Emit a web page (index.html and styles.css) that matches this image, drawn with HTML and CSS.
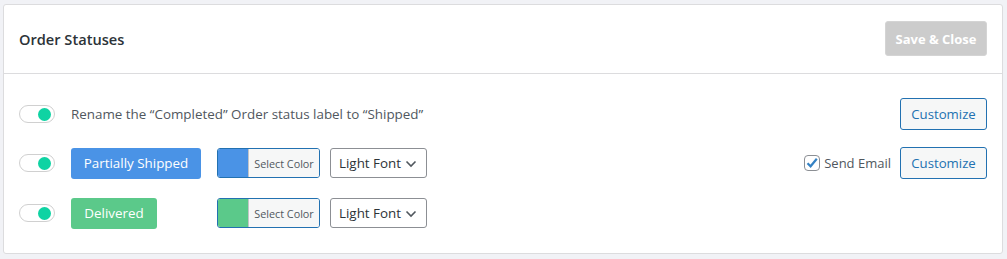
FILE: index.html
```html
<!DOCTYPE html>
<html>
<head>
<meta charset="utf-8">
<link rel="stylesheet" href="styles.css">
</head>
<body>
<div class="card">
  <div class="card-header">
    <h2 class="title">Order Statuses</h2>
    <button class="btn-save">Save &amp; Close</button>
  </div>
  <div class="card-body">
    <div class="row">
      <span class="toggle"><span class="knob"></span></span>
      <span class="row-text">Rename the “Completed” Order status label to “Shipped”</span>
      <div class="row-right">
        <button class="btn-customize">Customize</button>
      </div>
    </div>
    <div class="row">
      <span class="toggle"><span class="knob"></span></span>
      <div class="badge-slot"><span class="badge badge-blue">Partially Shipped</span></div>
      <div class="color-pick"><span class="swatch swatch-blue"></span><span class="color-label">Select Color</span></div>
      <div class="font-select">Light Font<svg class="chev" width="12" height="8" viewBox="0 0 12 8"><path d="M1.5 1.5 L6 6 L10.5 1.5" fill="none" stroke="#50575e" stroke-width="1.6"/></svg></div>
      <div class="row-right">
        <label class="send-email"><span class="checkbox"><svg width="14" height="14" viewBox="0 0 14 14"><path d="M2.5 7.2 L5.6 10.3 L11.8 2.8" fill="none" stroke="#3582c4" stroke-width="2.2"/></svg></span>Send Email</label>
        <button class="btn-customize">Customize</button>
      </div>
    </div>
    <div class="row">
      <span class="toggle"><span class="knob"></span></span>
      <div class="badge-slot"><span class="badge badge-green">Delivered</span></div>
      <div class="color-pick"><span class="swatch swatch-green"></span><span class="color-label">Select Color</span></div>
      <div class="font-select">Light Font<svg class="chev" width="12" height="8" viewBox="0 0 12 8"><path d="M1.5 1.5 L6 6 L10.5 1.5" fill="none" stroke="#50575e" stroke-width="1.6"/></svg></div>
    </div>
  </div>
</div>
</body>
</html>
```

FILE: styles.css
```css
* { box-sizing: border-box; }
body {
  margin: 0;
  background: #f1f2f6;
  font-family: "Open Sans", "Noto Sans", sans-serif;
  color: #3c434a;
}
.card {
  margin: 4px 4px 0 3px;
  height: 250px;
  background: #fff;
  border: 1px solid #dcdcde;
  border-radius: 3px;
}
.card-header {
  height: 69px;
  border-bottom: 1px solid #dcdcde;
  display: flex;
  align-items: center;
  justify-content: space-between;
  padding: 0 15px 1px 15px;
}
.title {
  margin: 0;
  font-size: 14.6px;
  font-weight: 600;
  color: #2c3338;
}
.btn-save {
  width: 102px;
  height: 35px;
  background: #cccccc;
  border: 1px solid #d4d4d4;
  border-radius: 3px;
  color: #fff;
  font-family: inherit;
  font-size: 13px;
  font-weight: 700;
  padding: 0;
}
.card-body {
  padding: 24px 15px 0 15px;
  display: flex;
  flex-direction: column;
  gap: 17px;
}
.row {
  height: 32px;
  display: flex;
  align-items: center;
}
.row + .row + .row { margin-top: 1px; }
.toggle {
  width: 36px;
  height: 18px;
  border: 1px solid #d0d0d0;
  border-radius: 9px;
  background: #fff;
  display: flex;
  align-items: center;
  justify-content: flex-end;
  padding-right: 3px;
  margin-right: 16px;
  flex: none;
}
.knob {
  width: 13px;
  height: 13px;
  border-radius: 50%;
  background: #0fd3a3;
}
.row-text {
  font-size: 13.4px;
  color: #50575e;
}
.badge-slot {
  width: 146px;
  flex: none;
}
.badge {
  display: inline-flex;
  align-items: center;
  height: 31px;
  border-radius: 3px;
  color: #fff;
  font-size: 13.4px;
}
.badge-blue { background: #4a93e6; width: 130px; justify-content: center; }
.badge-green { background: #5bc98a; width: 86px; justify-content: center; }
.color-pick {
  width: 103px;
  height: 30px;
  border: 1px solid #2271b1;
  border-radius: 3px;
  display: flex;
  overflow: hidden;
  margin-right: 10px;
  flex: none;
}
.swatch { width: 31px; flex: none; border-right: 1px solid #c3c4c7; }
.swatch-blue { background: #4a93e6; }
.swatch-green { background: #5bc98a; }
.color-label {
  flex: 1;
  background: #f6f7f7;
  font-size: 10.8px;
  color: #50575e;
  display: flex;
  align-items: center;
  justify-content: center;
}
.font-select {
  width: 97px;
  height: 30px;
  border: 1px solid #8c8f94;
  border-radius: 3px;
  display: flex;
  align-items: center;
  justify-content: space-between;
  padding: 0 9px 0 8px;
  font-size: 13.4px;
  color: #2c3338;
  flex: none;
}
.chev { margin-top: 1px; flex: none; }
.row-right {
  margin-left: auto;
  display: flex;
  align-items: center;
}
.send-email {
  display: flex;
  align-items: center;
  font-size: 13px;
  color: #50575e;
  margin-right: 9px;
}
.checkbox {
  width: 16px;
  height: 16px;
  border: 1px solid #8c8f94;
  border-radius: 4px;
  display: flex;
  align-items: center;
  justify-content: center;
  margin-right: 4px;
  background: #fff;
}
.btn-customize {
  width: 87px;
  height: 32px;
  background: #f6f7f7;
  border: 1px solid #2271b1;
  border-radius: 3px;
  color: #2271b1;
  font-family: inherit;
  font-size: 13.2px;
  padding: 0;
}
```
